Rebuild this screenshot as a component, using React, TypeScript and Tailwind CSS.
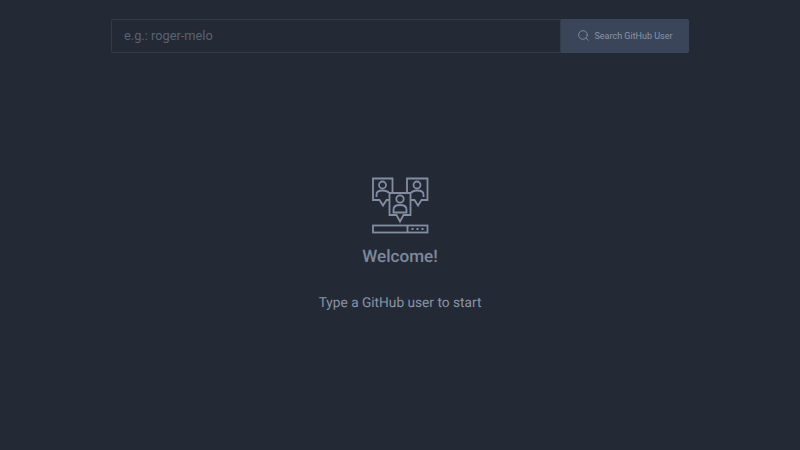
import { Search } from 'lucide-react';

function UsersIcon() {
  return (
    <svg width="58" height="58" viewBox="-0.5 0 58 58" fill="none" stroke="#838da1" strokeWidth="1.8" className="block">
      {/* left card */}
      <path d="M18 23H15L11.500 28.500 8 23H1.500V1.500H21V16" />
      <circle cx="11" cy="8" r="3.500" />
      <path d="M5 20V17.500C5 14.500 7.500 13.500 11 13.500C14 13.500 16 14 17.500 16" />
      {/* right card */}
      <path d="M35.500 16V1.500H56V23H50L46.500 28.500 43 23H39.500" />
      <circle cx="45.500" cy="8" r="3.500" />
      <path d="M39.500 16C41 14 43 13.500 45.500 13.500C49.500 13.500 52 14.500 52 17.500V20" />
      {/* middle card */}
      <path d="M18 16H39V38H32L28.500 44.500 25 38H18Z" />
      <circle cx="28.500" cy="22" r="3.700" />
      <path d="M22 35.500V32.500C22 29.500 24.500 28 28.500 28C32.500 28 35 29.500 35 32.500V35.500H22Z" />
      {/* bottom bar */}
      <rect x="1.500" y="48.500" width="54.500" height="7" />
      <path d="M36 48.500V55.500" />
      <path d="M40 52H42M45 52H47M50 52H52" />
    </svg>
  );
}

export default function App() {
  return (
    <div className="flex min-h-[450px] w-full flex-col items-center bg-[#232a35] font-['Roboto',sans-serif] [text-rendering:geometricPrecision]">
      <form className="mt-[19px] flex h-[34px] w-[578px]">
        <input
          type="text"
          placeholder="e.g.: roger-melo"
          className="min-w-0 flex-1 rounded-l-[2px] border border-[#333b4a] bg-[#232a35] px-3 text-[12.8px] text-[#8a94a6] outline-none placeholder:text-[#5a6272]"
        />
        <button
          type="button"
          className="flex w-[128px] items-center justify-center gap-1 rounded-r-[2px] bg-[#3a4559] text-[9px] text-[#8b95a8]"
        >
          <Search size={13} strokeWidth={1.5} className="-mt-px" />
          <span className="pt-[2px]">Search GitHub User</span>
        </button>
      </form>
      <div className="mt-[124px] flex flex-col items-center">
        <UsersIcon />
        <h1 className="mt-[9px] text-[17.100px] leading-[26px] font-medium text-[#7f899d]">Welcome!</h1>
        <p className="mt-[23px] text-[13.700px] leading-[20px] text-[#8a94a6]">Type a GitHub user to start</p>
      </div>
    </div>
  );
}
